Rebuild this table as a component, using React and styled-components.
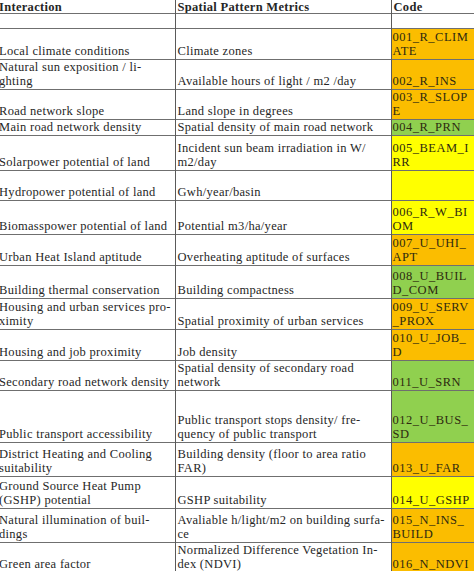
import React from "react";
import styled, { createGlobalStyle } from "styled-components";

const GlobalStyle = createGlobalStyle`
  html, body {
    margin: 0;
    padding: 0;
    background: #ffffff;
    overflow: hidden;
  }
  body {
    width: 474px;
    height: 571px;
  }
`;

const FILL = {
  orange: "#fbbd00",
  green: "#90d04f",
  yellow: "#ffff00",
  none: "transparent",
};

const Page = styled.div`
  width: 474px;
  height: 571px;
  overflow: hidden;
`;

const Table = styled.table`
  border-collapse: collapse;
  table-layout: fixed;
  width: 502px;
  margin-left: -3px;
  font-family: "Liberation Serif", "DejaVu Serif", serif;
  font-size: 12.5px;
  letter-spacing: 0.3px;
  line-height: 14.5px;
  color: #262626;
`;

const Row = styled.tr`
  height: ${(p) => p.$h}px;
  border-bottom: 1px solid #6f6f6f;
`;

const Cell = styled.td`
  padding: 0 2px 0 2px;
  vertical-align: bottom;
  white-space: nowrap;
  overflow: hidden;
  border-left: 1px solid #5a5a5a;
  &:first-child {
    border-left: none;
  }
`;

const HeadCell = styled(Cell).attrs({ as: "th" })`
  font-weight: bold;
  text-align: left;
  line-height: 12px;
`;

const CodeCell = styled(Cell)`
  background: ${(p) => FILL[p.$fill || "none"]};
  color: #2e2a10;
  letter-spacing: 0.5px;
  padding-left: 1px;
`;

const Lines = ({ text }) => {
  const parts = Array.isArray(text) ? text : [text];
  return parts.map((t, i) => (
    <React.Fragment key={i}>
      {i > 0 && <br />}
      {t}
    </React.Fragment>
  ));
};

const rows = [
  { h: 15, a: "", b: "", c: "", fill: "none" },
  { h: 31, a: "Local climate conditions", b: "Climate zones", c: ["001_R_CLIM", "ATE"], fill: "orange" },
  { h: 30, a: ["Natural sun exposition / li-", "ghting"], b: "Available hours of light / m2 /day", c: "002_R_INS", fill: "orange" },
  { h: 30, a: "Road network slope", b: "Land slope in degrees", c: ["003_R_SLOP", "E"], fill: "orange" },
  { h: 16, a: "Main road network density", b: "Spatial density of main road network", c: "004_R_PRN", fill: "green" },
  { h: 35, a: "Solarpower potential of land", b: ["Incident sun beam irradiation in W/", "m2/day"], c: ["005_BEAM_I", "RR"], fill: "yellow" },
  { h: 30, a: "Hydropower potential of land", b: "Gwh/year/basin", c: "", fill: "yellow" },
  { h: 34, a: "Biomasspower potential of land", b: "Potential m3/ha/year", c: ["006_R_W_BI", "OM"], fill: "yellow" },
  { h: 31, a: "Urban Heat Island aptitude", b: "Overheating aptitude of surfaces", c: ["007_U_UHI_", "APT"], fill: "orange" },
  { h: 33, a: "Building thermal conservation", b: "Building compactness", c: ["008_U_BUIL", "D_COM"], fill: "green" },
  { h: 31, a: ["Housing and urban services pro-", "ximity"], b: "Spatial proximity of urban services", c: ["009_U_SERV", "_PROX"], fill: "orange" },
  { h: 31, a: "Housing and job proximity", b: "Job density", c: ["010_U_JOB_", "D"], fill: "orange" },
  { h: 30, a: "Secondary road network density", b: ["Spatial density of secondary road", "network"], c: "011_U_SRN", fill: "green" },
  { h: 52, a: "Public transport accessibility", b: ["Public transport stops density/ fre-", "quency of public transport"], c: ["012_U_BUS_", "SD"], fill: "green" },
  { h: 34, a: ["District Heating and Cooling", "suitability"], b: ["Building density (floor to area ratio", "FAR)"], c: "013_U_FAR", fill: "orange" },
  { h: 32, a: ["Ground Source Heat Pump", "(GSHP) potential"], b: "GSHP suitability", c: "014_U_GSHP", fill: "yellow" },
  { h: 34, a: ["Natural illumination of buil-", "dings"], b: ["Avaliable h/light/m2 on building surfa-", "ce"], c: ["015_N_INS_", "BUILD"], fill: "orange" },
  { h: 30, a: "Green area factor", b: ["Normalized Difference Vegetation In-", "dex (NDVI)"], c: "016_N_NDVI", fill: "orange" },
];

export default function App() {
  return (
    <Page>
      <GlobalStyle />
      <Table>
        <colgroup>
          <col style={{ width: "178px" }} />
          <col style={{ width: "216px" }} />
          <col style={{ width: "108px" }} />
        </colgroup>
        <thead>
          <Row $h={13}>
            <HeadCell>Interaction</HeadCell>
            <HeadCell>Spatial Pattern Metrics</HeadCell>
            <HeadCell>Code</HeadCell>
          </Row>
        </thead>
        <tbody>
          {rows.map((r, i) => (
            <Row key={i} $h={r.h}>
              <Cell>
                <Lines text={r.a} />
              </Cell>
              <Cell>
                <Lines text={r.b} />
              </Cell>
              <CodeCell $fill={r.fill}>
                <Lines text={r.c} />
              </CodeCell>
            </Row>
          ))}
        </tbody>
      </Table>
    </Page>
  );
}
